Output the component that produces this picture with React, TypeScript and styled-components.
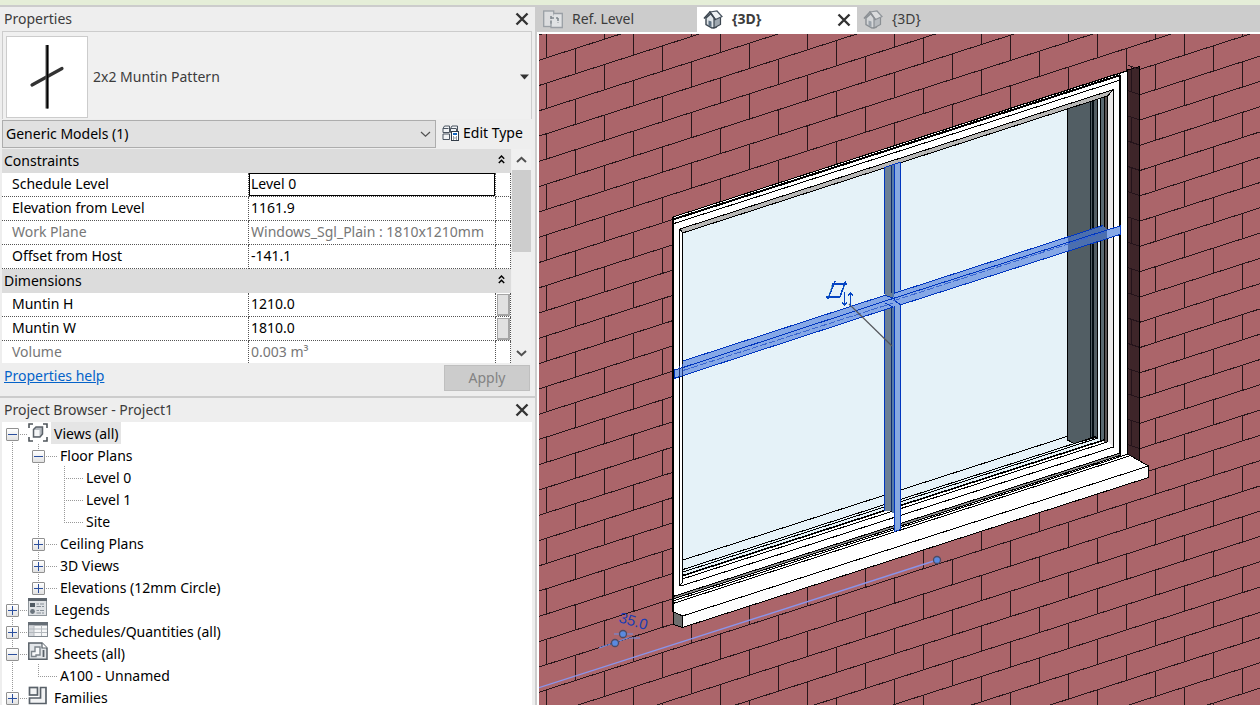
import React from "react";
import styled, { createGlobalStyle, css } from "styled-components";

const GlobalStyle = createGlobalStyle`
  * { box-sizing: border-box; }
  body {
    margin: 0;
    font: 14px/20px "Noto Sans", "Open Sans", sans-serif;
    color: #000;
  }
  button, input, select { font: inherit; color: inherit; }
`;

const Shell = styled.div`
  display: flex;
  flex-direction: column;
  height: 100vh;
  overflow: hidden;
  background: #ccc;
`;

const RibbonEdge = styled.div`
  flex: none;
  height: 5px;
  background: #e5eed8;
`;

const Workspace = styled.div`
  display: flex;
  flex: 1;
  min-height: 0;
`;

/* ---------- docked panels ---------- */

const Dock = styled.aside`
  display: flex;
  flex-direction: column;
  flex: none;
  gap: 2px;
  width: 535px;
  padding-top: 2px;
`;

const Panel = styled.section<{ $grow?: boolean }>`
  display: flex;
  flex-direction: column;
  flex: ${(p) => (p.$grow ? "1" : "none")};
  min-height: 0;
  background: #eee;
`;

const PanelTitle = styled.header`
  display: flex;
  align-items: center;
  justify-content: space-between;
  height: 24px;
  padding: 0 6px 0 4px;
  color: #3c3c3c;
`;

const Title = styled.h2`
  margin: 0;
  font: inherit;
`;

const IconButton = styled.button`
  display: flex;
  align-items: center;
  justify-content: center;
  padding: 0;
  border: 0;
  background: none;
`;

const TypeSelector = styled.div`
  display: flex;
  align-items: center;
  gap: 5px;
  height: 88px;
  margin: 0 3px 0 2px;
  padding: 2px 1px 0 3px;
  border: 1px solid #ccc;
  border-bottom: 0;
  background: #f0f0f0;
  color: #3c3c3c;
`;

const Thumb = styled.div`
  width: 82px;
  height: 82px;
  border: 1px solid #ccc;
  background: #fff;
`;

const TypeName = styled.span`
  flex: 1;
`;

const FilterRow = styled.div`
  display: flex;
  align-items: center;
  gap: 6px;
  height: 30px;
  padding: 0 3px 0 2px;
`;

const FilterBox = styled.div`
  display: grid;
  flex: 1;
  align-items: center;
  height: 28px;

  & > * {
    grid-area: 1 / 1;
  }

  & > svg {
    justify-self: end;
    margin-right: 5px;
    pointer-events: none;
  }
`;

const Select = styled.select`
  width: 100%;
  height: 28px;
  padding: 0 3px;
  appearance: none;
  border: 1px solid #adadad;
  border-radius: 0;
  background: #e1e1e1;
`;

const EditType = styled.button`
  display: flex;
  flex: none;
  align-items: center;
  gap: 4px;
  width: 90px;
  height: 26px;
  padding: 0 0 2px;
  border: 0;
  background: none;
  white-space: nowrap;
`;

const GridArea = styled.div`
  display: flex;
  gap: 1px;
  height: 214px;
  margin: 0 4px 0 2px;
  overflow: hidden;
`;

const Table = styled.table`
  flex: 1;
  align-self: flex-start;
  table-layout: fixed;
  border-collapse: separate;
  border-spacing: 0;
  background: #fff;
`;

const GroupHead = styled.th`
  height: 24px;
  padding: 0 6px 0 2px;
  background: #dcdcdc;
  font-weight: 400;
  text-align: left;
`;

const GroupLine = styled.div`
  display: flex;
  align-items: center;
  justify-content: space-between;
`;

const cell = css`
  height: 24px;
  padding: 0;
  border-right: 1px dotted #555;
  border-bottom: 1px dotted #555;
`;

const NameCell = styled.th<{ $muted?: boolean }>`
  ${cell}
  padding: 0 0 2px 10px;
  font-weight: 400;
  text-align: left;
  color: ${(p) => (p.$muted ? "#777" : "#000")};
`;

const Cell = styled.td`
  ${cell}
`;

const ValueInput = styled.input<{ $active?: boolean }>`
  display: block;
  width: 100%;
  height: 23px;
  padding: 0 1px 2px;
  border: 1px solid ${(p) => (p.$active ? "#000" : "transparent")};
  background: none;
  outline: 0;

  &:disabled {
    color: #777;
  }
`;

const Associate = styled.button`
  display: block;
  width: 13px;
  height: 22px;
  margin-left: 1px;
  padding: 0;
  border: 1px solid #a5a5a5;
  border-right-width: 2px;
  border-bottom-width: 2px;
  background: #e1e1e1;
`;

const ScrollTrack = styled.div`
  display: flex;
  flex-direction: column;
  width: 19px;
  background: #f0f0f0;
`;

const ScrollThumb = styled.div`
  height: 82px;
  background: #cdcdcd;
`;

const ScrollButton = styled(IconButton)`
  height: 21px;
`;

const Spacer = styled.div`
  flex: 1;
`;

const PanelFoot = styled.footer`
  display: flex;
  align-items: flex-start;
  justify-content: space-between;
  height: 33px;
  padding: 2px 5px 0 4px;
`;

const HelpLink = styled.a`
  padding-top: 1px;
  color: #0563c9;
`;

const Apply = styled.button`
  width: 86px;
  height: 26px;
  padding: 0;
  border: 1px solid #bfbfbf;
  background: #ccc;

  &:disabled {
    color: #838383;
  }
`;

/* ---------- project browser ---------- */

const Tree = styled.ul`
  flex: 1;
  min-height: 0;
  margin: 0 3px 0 2px;
  padding: 0;
  overflow: hidden;
  background: #fff;
  list-style: none;
`;

const TreeRow = styled.li`
  display: flex;
  height: 22px;
`;

type Rail = "none" | "full" | "up" | "down";

const railSize: Record<Rail, string> = {
  none: "0 0",
  full: "1px 22px",
  up: "1px 12px",
  down: "1px 10px",
};

const Guide = styled.span<{ $rail: Rail; $branch?: boolean; $wide?: boolean }>`
  flex: none;
  width: ${(p) => (p.$wide ? 29 : 26)}px;
  padding: 6px 0 0 4px;
  background-image: repeating-linear-gradient(to bottom, #999 0 1px, transparent 1px 2px),
    repeating-linear-gradient(to right, #999 0 1px, transparent 1px 2px);
  background-repeat: no-repeat;
  background-size: ${(p) => railSize[p.$rail]}, ${(p) => (p.$branch ? "20px 1px" : "0 0")};
  background-position: 10px ${(p) => (p.$rail === "down" ? 12 : 0)}px, 10px 12px;
`;

const Expander = styled.button`
  display: block;
  width: 13px;
  height: 13px;
  padding: 0;
  border: 1px solid #919191;
  border-radius: 1px;
  background: linear-gradient(#fff, #e2e2e2);

  & > svg {
    display: block;
  }
`;

const TreeIcon = styled.span`
  flex: none;
  width: 20px;
  margin-right: 3px;
`;

const TreeLabel = styled.span<{ $selected?: boolean }>`
  padding: 2px 3px 0;
  background: ${(p) => (p.$selected ? "#e5e5e5" : "none")};
  white-space: nowrap;
`;

/* ---------- drawing area ---------- */

const ViewArea = styled.main`
  display: flex;
  flex: 1;
  flex-direction: column;
  min-width: 0;
  margin-left: 2px;
`;

const Tabs = styled.nav`
  display: flex;
  height: 27px;
  padding-top: 2px;
`;

const Tab = styled.div<{ $active?: boolean }>`
  display: flex;
  align-items: center;
  gap: 8px;
  width: 160px;
  padding: 0 6px;
  background: ${(p) => (p.$active ? "#fff" : "none")};
  color: #3c3c3c;
  font-weight: ${(p) => (p.$active ? 700 : 400)};
`;

const TabName = styled.button`
  display: flex;
  flex: 1;
  align-items: center;
  gap: 9px;
  padding: 0 0 1px;
  border: 0;
  background: none;
  font-weight: inherit;
`;

const Canvas = styled.div`
  flex: 1;
  min-height: 0;
  border: solid #fff;
  border-width: 2px 0 0 2px;

  & > svg {
    display: block;
    width: 100%;
    height: 100%;
  }
`;

/* ---------- icons ---------- */

const CloseIcon = () => (
  <svg width="14" height="14" viewBox="0 0 14 14" aria-hidden="true">
    <path d="M1.5 1.5L12.5 12.5M12.5 1.5L1.5 12.5" stroke="#333" strokeWidth="2.4" />
  </svg>
);

const Chevron = ({ up, bold }: { up?: boolean; bold?: boolean }) => (
  <svg width="11" height="8" viewBox="0 0 11 8" aria-hidden="true">
    <path
      d={up ? "M1 6L5.5 1.8L10 6" : "M1 2L5.5 6.2L10 2"}
      fill="none"
      stroke="#505050"
      strokeWidth={bold ? 2 : 1.2}
    />
  </svg>
);

const DoubleChevron = () => (
  <svg width="7" height="13" viewBox="0 0 7 13" aria-hidden="true">
    <path d="M0.8 3.8L3.5 1L6.2 3.8M0.8 8L3.5 5.2L6.2 8" fill="none" stroke="#000" strokeWidth="1.4" />
  </svg>
);

const MuntinThumb = () => (
  <svg width="80" height="80" viewBox="0 0 80 80" aria-hidden="true">
    <path d="M25 48L55 31.5" stroke="#333" strokeWidth="3.2" strokeLinecap="round" />
    <path d="M40 8V71.5" stroke="#555" strokeWidth="3" />
    <path d="M40.5 8V71.5" stroke="#000" strokeWidth="1.8" />
  </svg>
);

const EditTypeIcon = () => (
  <svg width="17" height="16" viewBox="0 0 17 16" aria-hidden="true">
    <g fill="#f2f4f6" stroke="#4a5460">
      <path d="M1 3.5L2.5 1H7.5V7.5H1Z" />
      <path d="M8.5 3.5L10 1H15.5V6.5L14.5 7.5H8.5Z" />
      <path d="M1 9H7.5V14.5H1Z" />
      <path d="M1 3.5H6.5M8.5 3.5H14M14.5 3.5V7" fill="none" />
    </g>
    <rect x="9.5" y="6.5" width="7" height="9" fill="#fff" stroke="#333d49" />
    <rect x="11" y="8" width="4" height="2" fill="#1667c0" />
    <path d="M11 12h1M14 12h1M12.5 13h1M11 14h1M14 14h1" stroke="#333d49" />
  </svg>
);

const PlanIcon = () => (
  <svg width="20" height="19" viewBox="0 0 20 19" aria-hidden="true" opacity="0.8">
    <rect x="0.7" y="1" width="10" height="15.5" fill="#e0e2e4" stroke="#8e959c" strokeWidth="1.3" />
    <path d="M11 3.5H19.3V17.5H8V13" fill="#e6e8ea" stroke="#8e959c" strokeWidth="1.3" />
    <path d="M8 6V15M8 8H11M13 8H15M15 8V13" fill="none" stroke="#707981" strokeWidth="1.6" strokeDasharray="3 1.5" />
  </svg>
);

const HouseIcon = ({ faded }: { faded?: boolean }) => (
  <svg width="20" height="19" viewBox="0 0 20 19" aria-hidden="true" opacity={faded ? 0.45 : 1}>
    <path d="M3 8L8 3.5L13 9.5V17.5L9 18L3 14.5Z" fill="#dfe4e8" stroke="#3c4650" strokeWidth="1.4" />
    <path d="M11 9L17.5 7V14.5L11 18Z" fill="#9fa8b0" stroke="#3c4650" strokeWidth="1.2" />
    <path d="M7 2L14 1L19 6.5L12.5 9.5Z" fill="#eef1f3" stroke="#4a5561" strokeWidth="1.2" />
    <path d="M1 8.5L7 2L12.5 10" fill="none" stroke="#3c4650" strokeWidth="1.7" />
    <path d="M5.5 10.5L8.5 11.5V17L5.5 15.5Z" fill="#5e7182" />
  </svg>
);

const ViewsIcon = () => (
  <svg width="20" height="20" viewBox="0 0 20 20" aria-hidden="true">
    <path d="M1 6V2H5M15 2H19V6M19 15V19H15M5 19H1V15" fill="none" stroke="#4f555b" strokeWidth="1.6" />
    <path d="M5.5 7.5L8 5H14.5V12L12 15H5.5Z" fill="#b5bac0" stroke="#5c636a" strokeWidth="1.5" />
    <rect x="6.5" y="8" width="5" height="6" fill="#f5f6f7" />
  </svg>
);

const LegendIcon = () => (
  <svg width="20" height="20" viewBox="0 0 20 20" aria-hidden="true">
    <rect x="0.5" y="0.5" width="18" height="17" fill="#dfe2e5" stroke="#8d949a" />
    <rect x="0" y="0" width="19" height="3" fill="#5d656d" />
    <rect x="2" y="5" width="5" height="4" fill="#4f5962" />
    <circle cx="4.5" cy="13.5" r="2.4" fill="#6b757e" />
    <path d="M8.5 6H11M12 6H16M8.5 8.5H13M14 8.5H16M8.500 12.5H11M12 12.5H16M8.5 15H13M14 15H16" stroke="#868e97" />
  </svg>
);

const ScheduleIcon = () => (
  <svg width="20" height="20" viewBox="0 0 20 20" aria-hidden="true">
    <rect x="0.5" y="2.5" width="19" height="14" fill="#f6f7f8" stroke="#80878e" />
    <rect x="0" y="2" width="20" height="3.5" fill="#656d75" />
    <rect x="1" y="5.5" width="5" height="10.5" fill="#d5d8dc" />
    <path d="M1 9H19M1 12.5H19M6 5V16M13.5 5V16" stroke="#b4b9be" />
  </svg>
);

const SheetIcon = () => (
  <svg width="20" height="20" viewBox="0 0 20 20" aria-hidden="true">
    <path d="M0.8 1H14L19 6V17.2H0.8Z" fill="#e3e6e9" stroke="#596169" strokeWidth="1.5" />
    <path d="M14 1V6H19" fill="#fff" stroke="#596169" strokeWidth="1.2" />
    <path d="M3.5 14V9.5H7V5H12V13H8V14.5H3.5Z" fill="#f8f9fa" stroke="#7d858c" strokeWidth="1.4" />
    <path d="M15.5 8V15" stroke="#596169" strokeWidth="1.8" />
  </svg>
);

const FamilyIcon = () => (
  <svg width="20" height="20" viewBox="0 0 20 20" aria-hidden="true">
    <rect x="1.5" y="1.5" width="8" height="7.5" fill="#f2f3f4" stroke="#596169" strokeWidth="1.7" />
    <path d="M12.5 1.5H18V17.5H1.5V12H12.5Z" fill="#f2f3f4" stroke="#596169" strokeWidth="1.7" />
  </svg>
);

/* ---------- data ---------- */

type Property = {
  name: string;
  value: string;
  muted?: boolean;
  active?: boolean;
  linkable?: boolean;
};

const groups: { title: string; rows: Property[] }[] = [
  {
    title: "Constraints",
    rows: [
      { name: "Schedule Level", value: "Level 0", active: true },
      { name: "Elevation from Level", value: "1161.9" },
      { name: "Work Plane", value: "Windows_Sgl_Plain : 1810x1210mm", muted: true },
      { name: "Offset from Host", value: "-141.1" },
    ],
  },
  {
    title: "Dimensions",
    rows: [
      { name: "Muntin H", value: "1210.0", linkable: true },
      { name: "Muntin W", value: "1810.0", linkable: true },
      { name: "Volume", value: "0.003 m³", muted: true },
    ],
  },
];

type Node = {
  label: string;
  rails: Rail[];
  toggle?: "open" | "closed";
  icon?: React.ReactNode;
  selected?: boolean;
};

const nodes: Node[] = [
  { label: "Views (all)", rails: ["down"], toggle: "open", icon: <ViewsIcon />, selected: true },
  { label: "Floor Plans", rails: ["full", "full"], toggle: "open" },
  { label: "Level 0", rails: ["full", "full", "full"] },
  { label: "Level 1", rails: ["full", "full", "full"] },
  { label: "Site", rails: ["full", "full", "up"] },
  { label: "Ceiling Plans", rails: ["full", "full"], toggle: "closed" },
  { label: "3D Views", rails: ["full", "full"], toggle: "closed" },
  { label: "Elevations (12mm Circle)", rails: ["full", "up"], toggle: "closed" },
  { label: "Legends", rails: ["full"], toggle: "closed", icon: <LegendIcon /> },
  { label: "Schedules/Quantities (all)", rails: ["full"], toggle: "closed", icon: <ScheduleIcon /> },
  { label: "Sheets (all)", rails: ["full"], toggle: "open", icon: <SheetIcon /> },
  { label: "A100 - Unnamed", rails: ["full", "up"] },
  { label: "Families", rails: ["full"], toggle: "closed", icon: <FamilyIcon /> },
];

/* ---------- 3D drawing ---------- */

const SLOPE = 0.3213;
const COURSE = 25.28;
const courseY = (k: number, x: number) => 85.2 + COURSE * k - SLOPE * (x - 540);

const wallLines = (() => {
  const parts: string[] = [];
  for (let k = -4; k < 36; k++) {
    parts.push(`M530 ${courseY(k, 530).toFixed(1)}L1270 ${courseY(k, 1270).toFixed(1)}`);
    const start = k % 2 === 0 ? 546.5 : 575.5;
    for (let x = start; x < 1262; x += 58) {
      parts.push(`M${x} ${courseY(k, x).toFixed(1)}V${courseY(k + 1, x).toFixed(1)}`);
    }
  }
  return parts.join("");
})();

const revealLines = (() => {
  const parts: string[] = [];
  for (let k = 7; k < 23; k++) {
    const y = courseY(k, 1140);
    parts.push(`M1140 ${y.toFixed(1)}L1128 ${(y - 4).toFixed(1)}`);
    if (k % 2 !== 0) parts.push(`M1131.5 ${(y - 3).toFixed(1)}v${COURSE}`);
  }
  return parts.join("");
})();

const Grip = ({ x, y }: { x: number; y: number }) => (
  <circle cx={x} cy={y} r="3.5" fill="#5a8ae0" stroke="#4d4a63" strokeWidth="1.3" />
);

const WindowModel = () => (
  <svg viewBox="539 34 721 671" preserveAspectRatio="xMinYMin slice" role="img" aria-label="3D view of a window in a brick wall">
    <rect x="500" y="0" width="800" height="720" fill="#ab656a" />
    <g shapeRendering="crispEdges" fill="none" stroke="#000" strokeWidth="1">
      <path d={wallLines} stroke="#28161a" />

      {/* wall reveal */}
      <path d="M1127.5 70L1139.5 66.5V461L1127.5 454Z" fill="#3e2529" />
      <path d={revealLines} stroke="#24131a" />
      <path d="M1139.5 66V461" />

      {/* frame and sill */}
      <path d="M673 217L1127.5 70.5V454L1148.5 466V477.5L683 627L673 624.5Z" fill="#fff" />
      <path d="M682.5 616L1148.5 466V477.5L682.5 627.5Z" fill="#fcfcfc" />
      <path d="M673 611.5L682.5 616V627.5L673 624.5Z" fill="#6e6e6e" />

      {/* glass */}
      <path d="M682.5 232L1107.5 96V439L682.5 577Z" fill="#e5f2f8" stroke="none" />
      <path d="M1067.5 108V440L1074 443.5L1097.5 437V99Z" fill="#525e64" />
      <path d="M1090.5 101V438" stroke="#020c12" />
      <path d="M1093 100V438" strokeWidth="2" stroke="#020c12" />
      <path d="M1101 97H1104V441H1101Z" fill="#5a6a72" stroke="none" />
      <path d="M1104 97H1108V442H1104Z" fill="#5c5656" stroke="none" />
      <path d="M1108 95L1113.5 90V447L1108 442Z" fill="#ebe9e9" stroke="none" />
      <path d="M1100.5 98V440M1104.5 97V441M1107.5 96V442M1113.5 90V447" />
      <path d="M680 229L1113.5 89.5L1107.5 96L682.5 233Z" fill="#b9b8b7" />

      {/* frame edges */}
      <path d="M673 217L1127 71" />
      <path d="M674 219.2L1120 75.2" strokeWidth="2" />
      <path d="M674 223.5L1119 80.5" />
      <path d="M673 217V612" strokeWidth="2.4" />
      <path d="M679.5 229V586M682.5 233V582" />
      <path d="M1120 75V454" strokeWidth="2" />
      <path d="M682.5 582L679.5 586.5" />

      {/* bottom rails */}
      <path d="M683 560L1067 436.5" />
      <path d="M683 569.5L1096 436.5M683 572L1098 438" />
      <path d="M683 575.5L1104 440" strokeWidth="1.6" />
      <path d="M683 578.8L1108 441.7M681 586L1113.5 447" />
      <path d="M673 596.5L1120 453L1120 455.5L673 599Z" fill="#8c8c8c" />
      <path d="M673 601L1127 454.5M673 603.5L1131 455.5" />

      {/* selected muntins */}
      <g stroke="none">
        <path d="M884.5 168L892 165.5V511H884.5Z" fill="#6c7f94" />
        <path d="M892 165L895 164V513H892Z" fill="#587ba8" />
        <path d="M894.5 163.5L901 161.5V530L894.5 532Z" fill="#86a8e0" />
        <path d="M674 369.8L683 367V361L885 295.3L893 298.5V307L674 378.5Z" fill="#86a8e6" />
        <path d="M893 298L895 292.5L1103 225.5L1107 230L1120 226V234.5L893 307Z" fill="#86a8e6" />
        <path d="M1067.5 237L1103 225.5L1107 230V239L1067.5 251.5Z" fill="#4c6fae" />
      </g>
      <g stroke="#0036bf">
        <path d="M884.5 167.5V294M884.5 309V511M894.5 164V294M894.5 306V531.5M900.5 162V290M900.5 305V530M894.5 531.5L901 529.5M884.5 167.5L901 162" />
        <path d="M891.5 166V293M891.5 308V511" stroke="#0d2c6e" />
        <path d="M683 361L885 295.3L893 298L895 300M895 293L1103 225.5" />
        <path d="M674 378.5L893 307M900 305L1120 234.5V226L1107 230L893 298.5L683 367.5L674 370V378.5" />
        <path d="M683 370.5L893 303M893 301L1105 232" stroke="#3a66d0" strokeDasharray="7 2" />
        <path d="M885 303L893 307M895 301L901 305" />
      </g>
      <path d="M679.5 366V377M682.5 364V376" stroke="#17307a" />
    </g>

    {/* flip controls and leader */}
    <path d="M849 304L892 346" stroke="#55575c" strokeWidth="1.2" />
    <g fill="none" stroke="#0646c4" shapeRendering="crispEdges">
      <path d="M833 283L829 296.5M845 284L840 296.5" stroke="#7ab5bd" strokeWidth="1.5" />
      <path d="M832 284H847M826 296.5H840" strokeWidth="2" />
      <path d="M835 281L828 299M845.5 281L840 297" strokeWidth="1.4" />
      <path d="M844.5 292V305M842 302L844.500 305L847 302M850.5 306V293M848 296L850.5 293L853 296" strokeWidth="1.2" />
    </g>

    {/* placement dimension */}
    <g stroke="#8a94ea" strokeWidth="1.4">
      <path d="M539 687.7L937 560" />
      <path d="M599 648L628 638M614 634H633M627 638H640" stroke="#6f8ee6" strokeWidth="1.2" />
    </g>
    <Grip x={937} y={560} />
    <Grip x={623} y={634} />
    <Grip x={615} y={643} />
    <text x="618" y="622" transform="rotate(16 618 622)" fill="#1a3cb4" fontFamily="Liberation Sans, sans-serif" fontSize="15">
      35.0
    </text>
  </svg>
);

export default function App() {
  return (
    <Shell>
      <GlobalStyle />
      <RibbonEdge />
      <Workspace>
        <Dock>
          <Panel>
            <PanelTitle>
              <Title>Properties</Title>
              <IconButton aria-label="Close properties">
                <CloseIcon />
              </IconButton>
            </PanelTitle>
            <TypeSelector>
              <Thumb>
                <MuntinThumb />
              </Thumb>
              <TypeName>2x2 Muntin Pattern</TypeName>
              <IconButton aria-label="Choose type">
                <svg width="11" height="6" viewBox="0 0 11 6" aria-hidden="true">
                  <path d="M1 0.5H10L5.5 5.5Z" fill="#333" />
                </svg>
              </IconButton>
            </TypeSelector>
            <FilterRow>
              <FilterBox>
                <Select aria-label="Category filter">
                  <option>Generic Models (1)</option>
                </Select>
                <Chevron />
              </FilterBox>
              <EditType>
                <EditTypeIcon />
                Edit Type
              </EditType>
            </FilterRow>
            <GridArea>
              <Table>
                <colgroup>
                  <col width="247" />
                  <col />
                  <col width="15" />
                </colgroup>
                {groups.map((g) => (
                  <tbody key={g.title}>
                    <tr>
                      <GroupHead colSpan={3}>
                        <GroupLine>
                          {g.title}
                          <IconButton aria-label={`Collapse ${g.title}`}>
                            <DoubleChevron />
                          </IconButton>
                        </GroupLine>
                      </GroupHead>
                    </tr>
                    {g.rows.map((r) => (
                      <tr key={r.name}>
                        <NameCell scope="row" $muted={r.muted}>
                          {r.name}
                        </NameCell>
                        <Cell>
                          <ValueInput aria-label={r.name} defaultValue={r.value} disabled={r.muted} $active={r.active} />
                        </Cell>
                        <Cell>{r.linkable && <Associate aria-label={`Associate ${r.name}`} />}</Cell>
                      </tr>
                    ))}
                  </tbody>
                ))}
              </Table>
              <ScrollTrack>
                <ScrollButton aria-label="Scroll up">
                  <Chevron up bold />
                </ScrollButton>
                <ScrollThumb />
                <Spacer />
                <ScrollButton aria-label="Scroll down">
                  <Chevron bold />
                </ScrollButton>
              </ScrollTrack>
            </GridArea>
            <PanelFoot>
              <HelpLink href="#help">Properties help</HelpLink>
              <Apply disabled>Apply</Apply>
            </PanelFoot>
          </Panel>

          <Panel $grow>
            <PanelTitle>
              <Title>Project Browser - Project1</Title>
              <IconButton aria-label="Close project browser">
                <CloseIcon />
              </IconButton>
            </PanelTitle>
            <Tree>
              {nodes.map((n) => (
                <TreeRow key={n.label}>
                  {n.rails.map((rail, i) => {
                    const last = i === n.rails.length - 1;
                    return (
                      <Guide key={i} $rail={rail} $branch={last} $wide={last && !n.icon}>
                        {last && n.toggle && (
                          <Expander aria-label={`Toggle ${n.label}`}>
                            <svg width="11" height="11" viewBox="0 0 11 11" aria-hidden="true">
                              <path d={n.toggle === "open" ? "M1 5.5H10" : "M1 5.5H10M5.5 1V10"} stroke="#2b4f9e" />
                            </svg>
                          </Expander>
                        )}
                      </Guide>
                    );
                  })}
                  {n.icon && <TreeIcon>{n.icon}</TreeIcon>}
                  <TreeLabel $selected={n.selected}>{n.label}</TreeLabel>
                </TreeRow>
              ))}
            </Tree>
          </Panel>
        </Dock>

        <ViewArea>
          <Tabs>
            <Tab>
              <TabName>
                <PlanIcon />
                Ref. Level
              </TabName>
            </Tab>
            <Tab $active>
              <TabName>
                <HouseIcon />
                {"{3D}"}
              </TabName>
              <IconButton aria-label="Close view">
                <CloseIcon />
              </IconButton>
            </Tab>
            <Tab>
              <TabName>
                <HouseIcon faded />
                {"{3D}"}
              </TabName>
            </Tab>
          </Tabs>
          <Canvas>
            <WindowModel />
          </Canvas>
        </ViewArea>
      </Workspace>
    </Shell>
  );
}
